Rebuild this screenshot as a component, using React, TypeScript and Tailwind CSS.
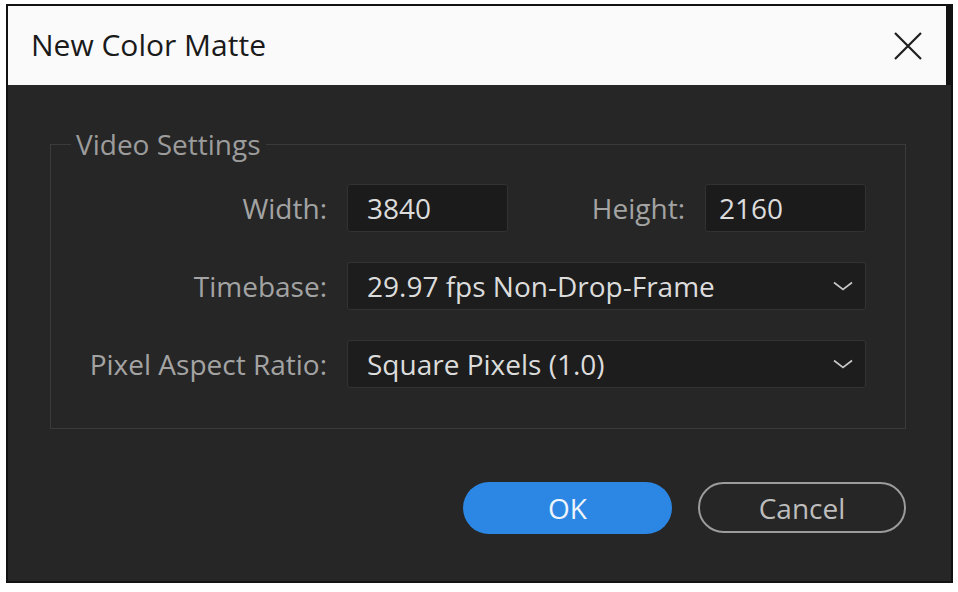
import React from "react";

const Chevron = () => (
  <svg width="20" height="10" viewBox="0 0 20 10" className="shrink-0">
    <path d="M1 1.5 L10 8.5 L19 1.5" fill="none" stroke="#c8c8c8" strokeWidth="1.6" />
  </svg>
);

export default function App() {
  const font = { fontFamily: '"Open Sans", "Noto Sans", sans-serif' };
  return (
    <div className="w-[958px] h-[592px] bg-white pt-[4px] pl-[6px]" style={font}>
      <div className="w-[947px] h-[579px] border-2 border-[#121212] bg-[#121212] flex flex-col">
        <div className="h-[79px] mr-[5px] bg-[#fafafa] flex items-center justify-between pl-[23px] pr-[24px]">
          <span className="text-[30px] text-[#1a1a1a] leading-none -mt-[2px]">New Color Matte</span>
          <svg width="28" height="28" viewBox="0 0 28 28">
            <path d="M1 1 L27 27 M27 1 L1 27" stroke="#1e1e1e" strokeWidth="2.2" />
          </svg>
        </div>
        <div className="flex-1 bg-[#262626] pl-[42px] pr-[45px] pt-[45px]">
          <fieldset className="border border-[#3b3b3b] h-[299px] pt-[26px] pr-[39px]">
            <legend className="ml-[20px] px-[5px] text-[28px] text-[#9c9c9c] leading-none">Video Settings</legend>
            <div className="flex flex-col gap-[30px] text-[28px]">
              <div className="flex items-center h-[48px]">
                <div className="w-[276px] text-right text-[#a3a3a3]">Width:</div>
                <div className="ml-[20px] w-[161px] h-[48px] bg-[#1b1b1b] border border-[#323232] rounded-[3px] flex items-center pl-[19px] text-[#dcdcdc]">3840</div>
                <div className="flex-1 text-right text-[#a3a3a3] pr-[20px]">Height:</div>
                <div className="w-[161px] h-[48px] bg-[#1b1b1b] border border-[#323232] rounded-[3px] flex items-center pl-[13px] text-[#dcdcdc]">2160</div>
              </div>
              <div className="flex items-center h-[48px]">
                <div className="w-[276px] text-right text-[#a3a3a3]">Timebase:</div>
                <div className="ml-[20px] flex-1 h-[48px] bg-[#1d1d1d] border border-[#333333] rounded-[3px] flex items-center justify-between pl-[19px] pr-[12px] text-[#dcdcdc]">
                  <span>29.97 fps Non-Drop-Frame</span>
                  <Chevron />
                </div>
              </div>
              <div className="flex items-center h-[48px]">
                <div className="w-[276px] text-right text-[#a3a3a3]">Pixel Aspect Ratio:</div>
                <div className="ml-[20px] flex-1 h-[48px] bg-[#1d1d1d] border border-[#333333] rounded-[3px] flex items-center justify-between pl-[19px] pr-[12px] text-[#dcdcdc]">
                  <span>Square Pixels (1.0)</span>
                  <Chevron />
                </div>
              </div>
            </div>
          </fieldset>
          <div className="flex justify-end gap-[26px] mt-[53px]">
            <button className="w-[209px] h-[52px] rounded-full bg-[#2b87e3] text-[28px] text-[#eef4fb]">OK</button>
            <button className="w-[208px] h-[51px] rounded-full border-2 border-[#9c9c9c] text-[28px] text-[#bdbdbd]">Cancel</button>
          </div>
        </div>
      </div>
    </div>
  );
}
